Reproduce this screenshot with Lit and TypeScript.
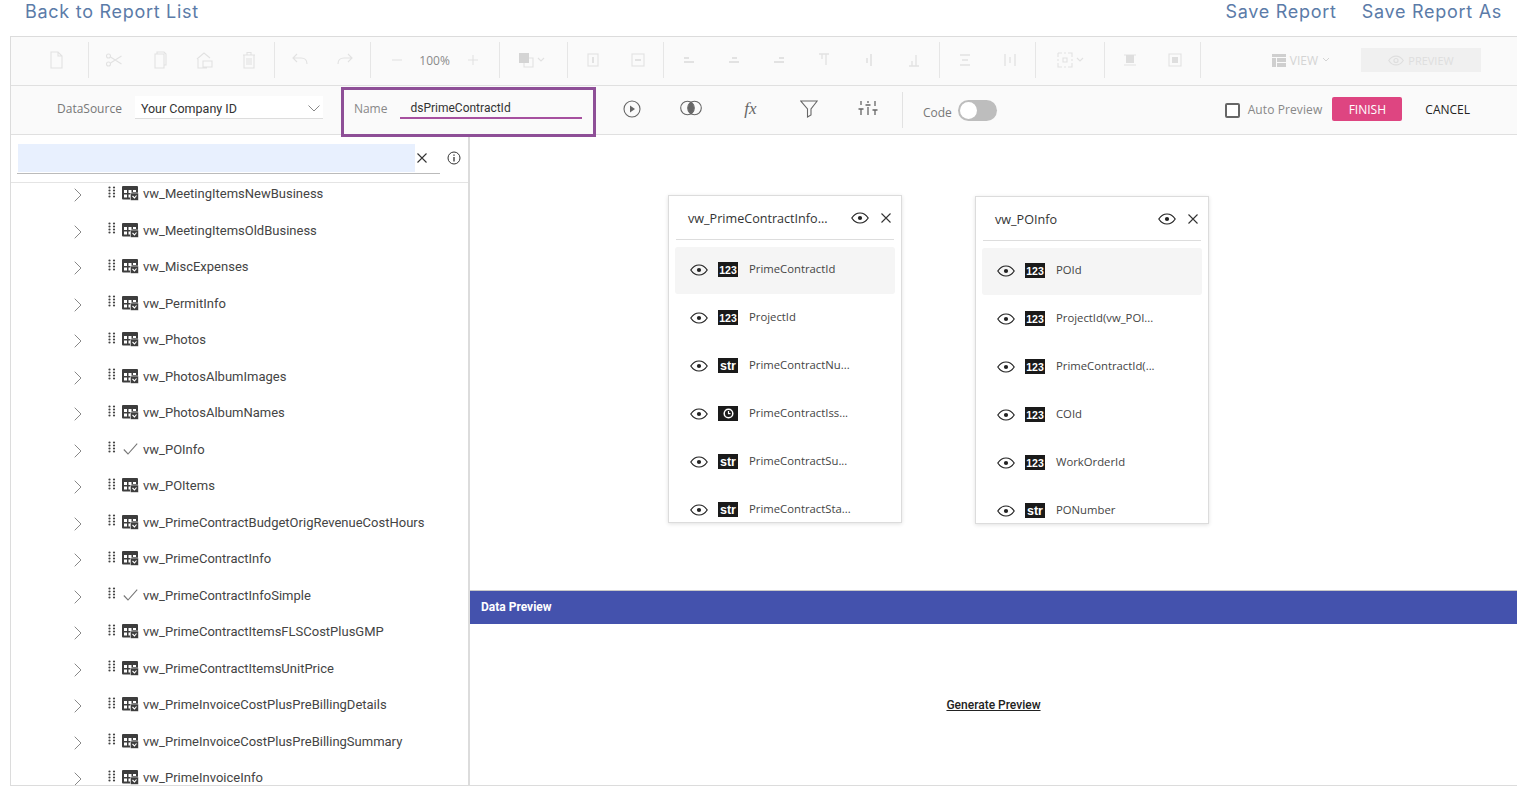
import { LitElement, html, css, svg, TemplateResult } from 'lit'
import { customElement, property } from 'lit/decorators.js'

type FieldType = 'num' | 'str' | 'date'

interface Field {
  name: string
  type: FieldType
}

const eyeIcon = html`<svg class="eye" width="18" height="12" viewBox="0 0 18 12" fill="none">
  <path d="M.8 6C3 2.600 5.800 1 9 1s6 1.600 8.200 5C15 9.400 12.200 11 9 11S3 9.400.800 6Z" stroke="#222" stroke-width="1.200"/>
  <circle cx="9" cy="6" r="2.100" fill="#222"/>
</svg>`

const closeIcon = html`<svg width="10" height="10" viewBox="0 0 10 10" stroke="#333" stroke-width="1.100" fill="none">
  <path d="M.5.5l9 9M9.500.5l-9 9"/>
</svg>`

/**
 * Table card on the query canvas
 */
@customElement('query-card')
export class QueryCard extends LitElement {
  @property() heading = ''
  @property({ type: Array }) fields: Field[] = []

  static styles = css`
    :host {
      display: block;
      width: 234px;
      height: 328px;
      box-sizing: border-box;
      background: #fff;
      border: 1px solid #dcdcdc;
      box-shadow: 0 1px 4px rgba(0, 0, 0, 0.12);
      overflow: hidden;
      font-family: 'Open Sans', sans-serif;
    }

    .head {
      display: flex;
      align-items: center;
      height: 43px;
      margin: 0 7px;
      padding: 0 3px 0 12px;
      box-sizing: content-box;
      border-bottom: 1px solid #ddd;
    }

    .title {
      flex: 1;
      padding-top: 2px;
      font-size: 12.600px;
      color: #333;
    }

    .head svg:last-child {
      margin-left: 12px;
    }

    .rows {
      margin: 7px 6px 0;
    }

    .row {
      display: flex;
      align-items: center;
      height: 47px;
      margin-bottom: 1px;
      padding: 0 0 2px 15px;
      box-sizing: border-box;
      border-radius: 3px;
      font-size: 11.300px;
      color: #444;
    }

    .row:first-child {
      background: #f5f5f5;
    }

    .name {
      margin-bottom: 2px;
    }

    .badge {
      display: flex;
      align-items: center;
      justify-content: center;
      width: 20px;
      height: 15px;
      margin: 0 11px 0 10px;
      background: #1a1a1a;
      color: #fff;
      font: bold 10.500px 'Liberation Sans', sans-serif;
    }

    .badge.str {
      font-size: 12.500px;
    }
  `

  private badge(type: FieldType): TemplateResult {
    if (type === 'date') {
      return html`<span class="badge">
        <svg width="11" height="11" viewBox="0 0 11 11" fill="none" stroke="#fff" stroke-width="1.500">
          <circle cx="5.500" cy="5.500" r="4.300"/>
          <path d="M5.500 3v2.700h2" stroke-width="1.200"/>
        </svg>
      </span>`
    }
    return type === 'num'
      ? html`<span class="badge">123</span>`
      : html`<span class="badge str">str</span>`
  }

  render(): TemplateResult {
    return html`
      <div class="head">
        <span class="title">${this.heading}</span>
        ${eyeIcon}${closeIcon}
      </div>
      <div class="rows">
        ${this.fields.map(
          f => html`<div class="row">${eyeIcon}${this.badge(f.type)}<span class="name">${f.name}</span></div>`
        )}
      </div>
    `
  }
}

const treeItems: string[] = [
  'vw_MeetingItemsNewBusiness',
  'vw_MeetingItemsOldBusiness',
  'vw_MiscExpenses',
  'vw_PermitInfo',
  'vw_Photos',
  'vw_PhotosAlbumImages',
  'vw_PhotosAlbumNames',
  'vw_POInfo',
  'vw_POItems',
  'vw_PrimeContractBudgetOrigRevenueCostHours',
  'vw_PrimeContractInfo',
  'vw_PrimeContractInfoSimple',
  'vw_PrimeContractItemsFLSCostPlusGMP',
  'vw_PrimeContractItemsUnitPrice',
  'vw_PrimeInvoiceCostPlusPreBillingDetails',
  'vw_PrimeInvoiceCostPlusPreBillingSummary',
  'vw_PrimeInvoiceInfo',
]

const selectedItems = ['vw_POInfo', 'vw_PrimeContractInfoSimple']

const primeFields: Field[] = [
  { name: 'PrimeContractId', type: 'num' },
  { name: 'ProjectId', type: 'num' },
  { name: 'PrimeContractNu...', type: 'str' },
  { name: 'PrimeContractIss...', type: 'date' },
  { name: 'PrimeContractSu...', type: 'str' },
  { name: 'PrimeContractSta...', type: 'str' },
]

const poFields: Field[] = [
  { name: 'POId', type: 'num' },
  { name: 'ProjectId(vw_POI...', type: 'num' },
  { name: 'PrimeContractId(...', type: 'num' },
  { name: 'COId', type: 'num' },
  { name: 'WorkOrderId', type: 'num' },
  { name: 'PONumber', type: 'str' },
]

// faint toolbar glyphs, all on a 20x20 box
const toolPaths = {
  file: svg`<path d="M5 2h7l4 4v12H5zM12 2v4h4"/>`,
  cut: svg`<circle cx="4.500" cy="6" r="2"/><circle cx="4.500" cy="14" r="2"/><path d="M6.500 7l11 7M6.500 13l11-7"/>`,
  copy: svg`<path d="M6 4h9v14H6zM8 4V2h7l2 2v11h-2"/>`,
  paste: svg`<path d="M3 9l7-6 6 5M4 9v9h9M9 11h9v6H9z"/>`,
  trash: svg`<path d="M4 5h12M8 5V2.500h4V5M5 5v13h10V5M8 8v7M10 8v7M12 8v7"/>`,
  undo: svg`<path d="M17 14c0-4-2-6-6-6H3M7 4L3 8l4 4"/>`,
  redo: svg`<path d="M3 14c0-4 2-6 6-6h8M13 4l4 4-4 4"/>`,
  minus: svg`<path d="M5 10h10"/>`,
  plus: svg`<path d="M5 10h10M10 5v10"/>`,
  layer: svg`<rect x="3" y="3" width="10" height="10" fill="#d4d4d4" stroke="none"/><path d="M13 8h4v9H8v-4"/>`,
  front: svg`<rect x="5" y="4" width="10" height="12"/><path d="M10 7v6" stroke-width="2"/>`,
  back: svg`<rect x="4" y="4" width="12" height="12"/><path d="M7 10h6" stroke-width="2"/>`,
  alignL: svg`<path d="M5 8h5M5 12h10" stroke-width="2"/>`,
  alignC: svg`<path d="M8 8h5M5 12h10" stroke-width="2"/>`,
  alignR: svg`<path d="M10 8h5M5 12h10" stroke-width="2"/>`,
  alignT: svg`<path d="M5 4h10M8 4v5M12 4v11" stroke-width="1.300"/>`,
  alignM: svg`<path d="M8 8v5M12 4v12" stroke-width="1.600"/>`,
  alignB: svg`<path d="M5 16h10M8 11v5M12 5v11" stroke-width="1.300"/>`,
  hGap: svg`<path d="M5 5h10M5 15h10M7 10h6" stroke-width="1.300"/>`,
  vGap: svg`<path d="M5 4v12M15 4v12M10 7v6" stroke-width="1.300"/>`,
  group: svg`<path d="M3 3h4M9 3h2M13 3h4v4M17 9v2M17 13v4h-4M11 17H9M7 17H3v-4M3 11V9M3 7V3M8 8h4v4H8z"/>`,
  center: svg`<path d="M4 5h12M4 15h12"/><rect x="6" y="5" width="8" height="8" fill="#dedede" stroke="none"/>`,
  middle: svg`<path d="M4 4h12v12H4z"/><rect x="7" y="7" width="6" height="6" fill="#dedede" stroke="none"/>`,
}

type ToolName = keyof typeof toolPaths

@customElement('app-root')
export class AppRoot extends LitElement {
  static styles = css`
    :host {
      display: block;
      width: 1517px;
      height: 794px;
      overflow: hidden;
      background: #fff;
      font-family: 'Roboto', sans-serif;
    }

    .topbar {
      display: flex;
      justify-content: space-between;
      height: 36px;
      padding: 0 15px 0 25px;
      box-sizing: border-box;
      font: 18px/23px 'Inter', sans-serif;
      letter-spacing: 0.72px;
      color: #5b7ba8;
    }

    .save-links {
      display: flex;
      gap: 25px;
    }

    .shell {
      display: flex;
      flex-direction: column;
      height: 750px;
      margin-left: 10px;
      box-sizing: border-box;
      border: 1px solid #dcdcdc;
      border-right: none;
    }

    .toolbar {
      display: flex;
      align-items: center;
      flex: none;
      height: 48px;
      padding: 0 0 2px 22px;
      box-sizing: border-box;
      background: #fafafa;
    }

    .tool {
      display: flex;
      align-items: center;
      justify-content: center;
      flex: none;
      width: 45px;
    }

    .tool svg {
      fill: none;
      stroke: #e2e2e2;
      stroke-width: 1.100;
    }

    .tool.first {
      margin-right: 7.500px;
    }

    .tool.pct {
      width: 31px;
      font: 12px 'Open Sans', sans-serif;
      color: #8a8a8a;
    }

    .tool.wide {
      justify-content: flex-start;
      gap: 1px;
      width: 62px;
      padding-left: 14px;
      box-sizing: border-box;
    }

    .tool.last-zoom {
      width: 46px;
    }

    .tool.wider {
      padding-left: 16px;
    }

    .sep {
      flex: none;
      width: 1px;
      height: 36px;
      margin: 0 2.600px;
      background: #e6e6e6;
    }

    .view {
      display: flex;
      align-items: center;
      gap: 4px;
      margin-left: auto;
      font: 12px 'Open Sans', sans-serif;
      color: #d4d4d4;
    }

    .preview-btn {
      display: flex;
      align-items: center;
      justify-content: center;
      gap: 4px;
      width: 120px;
      height: 24px;
      margin: 0 36px 0 31px;
      background: #f0f0f0;
      font: 11px 'Open Sans', sans-serif;
      color: #dedede;
    }

    .query-bar {
      display: flex;
      align-items: flex-start;
      flex: none;
      height: 49px;
      padding: 0 47px 0 46px;
      box-sizing: border-box;
      border-top: 1px solid #e0e0e0;
      background: #fafafa;
      font: 12px 'Open Sans', sans-serif;
      color: #777;
    }

    .query-bar > * {
      flex: none;
    }

    .ds-label {
      margin: 14px 13px 0 0;
    }

    .ds-select {
      display: flex;
      align-items: center;
      justify-content: space-between;
      width: 188px;
      height: 23px;
      margin-top: 10px;
      padding: 3px 3px 0 6px;
      box-sizing: border-box;
      background: #fff;
      border-bottom: 1px solid #ddd;
      font: 12.500px 'Roboto', sans-serif;
      color: #333;
    }

    .name-box {
      display: flex;
      align-items: flex-start;
      position: relative;
      z-index: 1;
      width: 255px;
      height: 50px;
      margin: 1px 0 0 18px;
      padding-left: 10px;
      box-sizing: border-box;
      border: 3px solid #8e4f97;
    }

    .name-label {
      margin-top: 10px;
      color: #888;
    }

    .name-input {
      width: 182px;
      height: 29px;
      margin-left: 13px;
      padding: 11px 0 0 10px;
      box-sizing: border-box;
      border-bottom: 2px solid #a6509f;
      font: 12px 'Roboto', sans-serif;
      color: #333;
    }

    .q-icon {
      display: flex;
      justify-content: center;
      width: 59px;
      margin-top: 14px;
    }

    .q-icon svg {
      fill: none;
      stroke: #666;
      stroke-width: 1.100;
    }

    .q-icon.first {
      margin-left: 7px;
    }

    .q-icon .fx {
      font: italic 17px/18px 'Liberation Serif', serif;
      color: #666;
    }

    .q-sep {
      width: 1px;
      height: 36px;
      margin: 6px 20px 0 4px;
      background: #e2e2e2;
    }

    .code-label {
      margin: 18px 6px 0 0;
      color: #777;
    }

    .toggle {
      width: 39px;
      height: 21px;
      margin-top: 14px;
      padding: 2px;
      box-sizing: border-box;
      border-radius: 11px;
      background: #bdbdbd;
    }

    .knob {
      width: 17px;
      height: 17px;
      border-radius: 50%;
      background: #fff;
    }

    .checkbox {
      width: 15px;
      height: 15px;
      margin: 17px 8px 0 auto;
      box-sizing: border-box;
      border: 2px solid #666;
      border-radius: 2px;
      background: #fff;
    }

    .auto-label {
      margin: 15px 10px 0 0;
      letter-spacing: 0.1px;
      color: #888;
    }

    .finish {
      display: flex;
      align-items: center;
      justify-content: center;
      width: 70px;
      height: 24px;
      margin-top: 11px;
      border-radius: 2px;
      background: #de4581;
      color: #fff;
    }

    .cancel {
      margin: 15px 0 0 23px;
      color: #222;
    }

    .panels {
      display: flex;
      flex: 1;
      min-height: 0;
      border-top: 1px solid #e0e0e0;
    }

    .left {
      display: flex;
      flex-direction: column;
      flex: none;
      width: 459px;
      box-sizing: border-box;
      border-right: 2px solid #dcdcdc;
    }

    .search-row {
      flex: none;
      height: 48px;
      box-sizing: border-box;
      border-bottom: 1px solid #e4e4e4;
    }

    .search {
      display: flex;
      align-items: center;
      width: 423px;
      height: 30px;
      margin: 8px 0 0 6px;
      border-bottom: 1px solid #bbb;
    }

    .search > * {
      flex: none;
    }

    .search-fill {
      width: 397px;
      height: 28px;
      margin-left: 1px;
      background: #e8f0fe;
    }

    .search-close {
      display: flex;
      margin-left: 2px;
    }

    .search-info {
      margin-left: 20px;
    }

    .tree {
      flex: 1;
      min-height: 0;
      overflow: hidden;
    }

    .tree-inner {
      margin-top: -7.500px;
    }

    .tree-row {
      display: flex;
      align-items: center;
      height: 36.500px;
      padding-left: 63px;
      font-size: 13px;
      color: #444;
    }

    .chev {
      margin: 3px 26px 0 0;
    }

    .dots {
      margin: -3px 6px 0 0;
    }

    .tree-icon {
      display: flex;
      justify-content: center;
      width: 17px;
      margin-right: 4px;
    }

    .right {
      display: flex;
      flex-direction: column;
      flex: 1;
      min-width: 0;
    }

    .canvas {
      position: relative;
      flex: none;
      height: 456px;
      border-bottom: 1px solid #c8c8c8;
      box-sizing: border-box;
    }

    query-card {
      position: absolute;
    }

    .card-prime {
      left: 198px;
      top: 60px;
    }

    .card-po {
      left: 505px;
      top: 61px;
    }

    .preview-head {
      display: flex;
      align-items: center;
      flex: none;
      height: 33px;
      padding: 0 0 2px 11px;
      box-sizing: border-box;
      background: #4452ad;
      font-size: 12px;
      font-weight: 700;
      color: #fff;
    }

    .preview-body {
      display: flex;
      align-items: center;
      justify-content: center;
      flex: 1;
      font-size: 12px;
      font-weight: 500;
      color: #222;
      text-decoration: underline;
    }
  `

  private tool(name: ToolName, extra = ''): TemplateResult {
    return html`<span class="tool ${extra}">
      <svg width="20" height="20" viewBox="0 0 20 20">${toolPaths[name]}</svg>
    </span>`
  }

  private toolDrop(name: ToolName, extra: string): TemplateResult {
    return html`<span class="tool wide ${extra}">
      <svg width="20" height="20" viewBox="0 0 20 20">${toolPaths[name]}</svg>
      <svg width="8" height="6" viewBox="0 0 8 6"><path d="M1 1l3 3 3-3"/></svg>
    </span>`
  }

  private renderToolbar(): TemplateResult {
    const sep = html`<span class="sep"></span>`
    return html`
      <div class="toolbar">
        ${this.tool('file', 'first')}${sep}
        ${this.tool('cut')}${this.tool('copy')}${this.tool('paste')}${this.tool('trash')}${sep}
        ${this.tool('undo')}${this.tool('redo')}${sep}
        ${this.tool('minus')}<span class="tool pct">100%</span>${this.tool('plus', 'last-zoom')}${sep}
        ${this.toolDrop('layer', '')}${sep}
        ${this.tool('front')}${this.tool('back')}${sep}
        ${this.tool('alignL')}${this.tool('alignC')}${this.tool('alignR')}
        ${this.tool('alignT')}${this.tool('alignM')}${this.tool('alignB')}${sep}
        ${this.tool('hGap')}${this.tool('vGap')}${sep}
        ${this.toolDrop('group', 'wider')}${sep}
        ${this.tool('center')}${this.tool('middle')}${sep}
        <span class="view">
          <svg width="14" height="13" viewBox="0 0 14 13" fill="#cfcfcf">
            <path d="M0 0h14v3H0zM0 4h4v9H0zM5 4h9v4H5zM5 9h9v4H5z"/>
          </svg>
          VIEW
          <svg width="8" height="6" viewBox="0 0 8 6" fill="none" stroke="#d4d4d4"><path d="M1 1l3 3 3-3"/></svg>
        </span>
        <span class="preview-btn">
          <svg width="16" height="11" viewBox="0 0 18 12" fill="none" stroke="#dedede" stroke-width="1.300">
            <path d="M.8 6C3 2.600 5.800 1 9 1s6 1.600 8.200 5C15 9.400 12.200 11 9 11S3 9.400.800 6Z"/>
            <circle cx="9" cy="6" r="2.300"/>
          </svg>
          PREVIEW
        </span>
      </div>
    `
  }

  private renderQueryBar(): TemplateResult {
    return html`
      <div class="query-bar">
        <span class="ds-label">DataSource</span>
        <div class="ds-select">
          Your Company ID
          <svg width="12" height="7" viewBox="0 0 12 7" fill="none" stroke="#888"><path d="M.5.5L6 6 11.500.5"/></svg>
        </div>
        <div class="name-box">
          <span class="name-label">Name</span>
          <div class="name-input">dsPrimeContractId</div>
        </div>
        <span class="q-icon first">
          <svg width="18" height="18" viewBox="0 0 18 18">
            <circle cx="9" cy="9" r="8"/>
            <path d="M7 5.500l5 3.500-5 3.500z" fill="#666" stroke="none"/>
          </svg>
        </span>
        <span class="q-icon">
          <svg width="22" height="16" viewBox="0 0 22 16">
            <circle cx="7.500" cy="8" r="6.800"/>
            <circle cx="14.500" cy="8" r="6.800"/>
            <path d="M11 2.300a6.800 6.800 0 0 1 0 11.400 6.800 6.800 0 0 1 0-11.400z" fill="#666" stroke="none"/>
          </svg>
        </span>
        <span class="q-icon"><span class="fx">fx</span></span>
        <span class="q-icon">
          <svg width="18" height="18" viewBox="0 0 18 18"><path d="M.8 1h16.400L11 9v6l-3.500 2V9z"/></svg>
        </span>
        <span class="q-icon">
          <svg width="20" height="16" viewBox="0 0 20 16">
            <path d="M3 1v4M3 9v6M0.500 9h5M10 1v2M10 7v8M7.500 5h5M17 1v5M17 10v5M14.500 10h5" stroke-width="1.300"/>
          </svg>
        </span>
        <span class="q-sep"></span>
        <span class="code-label">Code</span>
        <div class="toggle"><div class="knob"></div></div>
        <span class="checkbox"></span>
        <span class="auto-label">Auto Preview</span>
        <span class="finish">FINISH</span>
        <span class="cancel">CANCEL</span>
      </div>
    `
  }

  private renderTreeRow(name: string): TemplateResult {
    const selected = selectedItems.includes(name)
    return html`
      <div class="tree-row">
        <svg class="chev" width="8" height="14" viewBox="0 0 8 14" fill="none" stroke="#888"><path d="M.7.7L7 7 .7 13.300"/></svg>
        <svg class="dots" width="8" height="13" viewBox="0 0 8 13" fill="#444">
          ${[1.5, 4.5, 7.5, 10.5].map(
            y => svg`<circle cx="1.500" cy=${y} r="1.100"/><circle cx="6" cy=${y} r="1.100"/>`
          )}
        </svg>
        <span class="tree-icon">
          ${selected
            ? html`<svg width="15" height="12" viewBox="0 0 15 12" fill="none" stroke="#777" stroke-width="1.100"><path d="M.8 6.500L5 11 14.200.7"/></svg>`
            : html`<svg width="17" height="15" viewBox="0 0 17 15">
                <rect width="16" height="13.500" rx="1" fill="#3d3d3d"/>
                <path d="M2 4h3v3H2zM6.500 4h3v3h-3zM11 4h3v2h-3zM2 8.500h3v3H2zM6.500 8.500h2v3h-2z" fill="#fff"/>
                <rect x="8.500" y="7" width="8" height="7.500" rx="1" fill="#3d3d3d" stroke="#fff" stroke-width=".6"/>
                <path d="M10.500 10l2 2 2-2.500" fill="none" stroke="#fff" stroke-width="1.100"/>
              </svg>`}
        </span>
        <span>${name}</span>
      </div>
    `
  }

  render(): TemplateResult {
    return html`
      <div class="topbar">
        <span>Back to Report List</span>
        <div class="save-links"><span>Save Report</span><span>Save Report As</span></div>
      </div>
      <div class="shell">
        ${this.renderToolbar()}
        ${this.renderQueryBar()}
        <div class="panels">
          <div class="left">
            <div class="search-row">
              <div class="search">
                <div class="search-fill"></div>
                <span class="search-close">${closeIcon}</span>
                <svg class="search-info" width="14" height="14" viewBox="0 0 14 14" fill="none" stroke="#333">
                  <circle cx="7" cy="7" r="6"/>
                  <path d="M7 6v4.500M7 3.500v1.300" stroke-width="1.300"/>
                </svg>
              </div>
            </div>
            <div class="tree">
              <div class="tree-inner">${treeItems.map(n => this.renderTreeRow(n))}</div>
            </div>
          </div>
          <div class="right">
            <div class="canvas">
              <query-card class="card-prime" heading="vw_PrimeContractInfo..." .fields=${primeFields}></query-card>
              <query-card class="card-po" heading="vw_POInfo" .fields=${poFields}></query-card>
            </div>
            <div class="preview-head">Data Preview</div>
            <div class="preview-body">Generate Preview</div>
          </div>
        </div>
      </div>
    `
  }
}
